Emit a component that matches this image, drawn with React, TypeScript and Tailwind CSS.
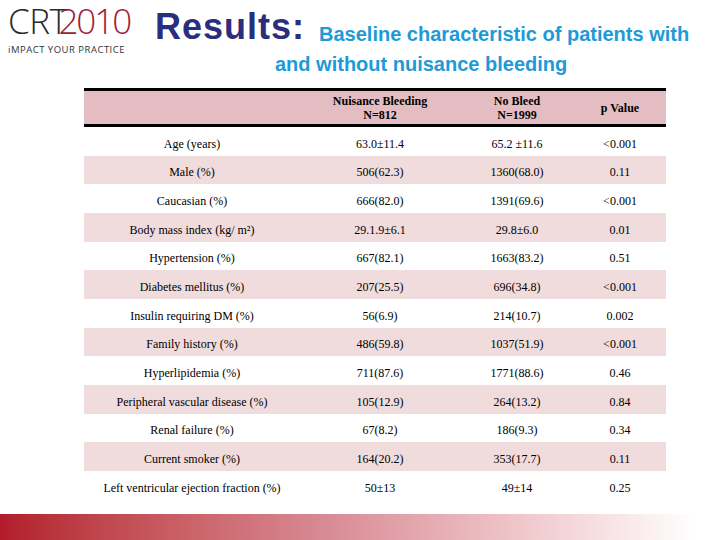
import React from "react";

const rows: [string, string, string, string][] = [
  ["Age (years)", "63.0±11.4", "65.2 ±11.6", "<0.001"],
  ["Male (%)", "506(62.3)", "1360(68.0)", "0.11"],
  ["Caucasian (%)", "666(82.0)", "1391(69.6)", "<0.001"],
  ["Body mass index (kg/ m²)", "29.1.9±6.1", "29.8±6.0", "0.01"],
  ["Hypertension (%)", "667(82.1)", "1663(83.2)", "0.51"],
  ["Diabetes mellitus (%)", "207(25.5)", "696(34.8)", "<0.001"],
  ["Insulin requiring DM (%)", "56(6.9)", "214(10.7)", "0.002"],
  ["Family history (%)", "486(59.8)", "1037(51.9)", "<0.001"],
  ["Hyperlipidemia (%)", "711(87.6)", "1771(88.6)", "0.46"],
  ["Peripheral vascular disease (%)", "105(12.9)", "264(13.2)", "0.84"],
  ["Renal failure (%)", "67(8.2)", "186(9.3)", "0.34"],
  ["Current smoker (%)", "164(20.2)", "353(17.7)", "0.11"],
  ["Left ventricular ejection fraction (%)", "50±13", "49±14", "0.25"],
];

export default function App() {
  return (
    <div className="w-[720px] h-[540px] bg-white flex flex-col overflow-hidden">
      {/* Header */}
      <div className="h-[88px] flex">
        <div className="w-[147px] pl-[8px] pt-[0px] flex flex-col" style={{ fontFamily: '"Open Sans", sans-serif' }}>
          <div className="flex items-baseline leading-[42px] h-[42px]">
            <span className="text-[35px] font-light text-[#2a2a2a] tracking-[-0.5px]">CRT</span>
            <span className="text-[35px] font-light text-[#9e2038] ml-[-9px] tracking-[-2px]">2010</span>
          </div>
          <div className="mt-[3px] text-[9.5px] leading-[10px] text-[#333] tracking-[0.5px] whitespace-nowrap">
            iMPACT YOUR PRACTICE
          </div>
        </div>
        <div className="flex flex-col pt-[9px] pl-[8px]" style={{ fontFamily: '"Liberation Sans", Arial, sans-serif' }}>
          <div className="flex items-baseline whitespace-nowrap">
            <span className="text-[36px] leading-none font-bold text-[#2b2d7d] tracking-[1px]">Results:</span>
            <span className="ml-[14px] text-[20px] leading-none font-bold text-[#1e9ad6] relative top-[2px]">
              Baseline characteristic of patients with
            </span>
          </div>
          <div className="pl-[120px] mt-[9px] text-[20px] leading-none font-bold text-[#1e9ad6] whitespace-nowrap">
            and without nuisance bleeding
          </div>
        </div>
      </div>

      {/* Table */}
      <div className="ml-[84px] w-[582px] text-[12px] text-black" style={{ fontFamily: '"Liberation Serif", "Times New Roman", serif' }}>
        <div className="grid grid-cols-[216px_160px_114px_92px] h-[39px] border-y-[3px] border-black bg-[#e3bdc1] font-bold leading-[14px] items-center text-center">
          <div></div>
          <div>Nuisance Bleeding<br />N=812</div>
          <div>No Bleed<br />N=1999</div>
          <div>p Value</div>
        </div>
        {rows.map((r, i) => (
          <div
            key={i}
            className={`grid grid-cols-[216px_160px_114px_92px] h-[28.67px] items-center text-center pt-[5px] ${i % 2 === 1 ? "bg-[#f0dcdd]" : "bg-white"}`}
          >
            <div className="whitespace-nowrap">{r[0]}</div>
            <div>{r[1]}</div>
            <div>{r[2]}</div>
            <div>{r[3]}</div>
          </div>
        ))}
      </div>

      {/* Footer gradient */}
      <div className="mt-auto h-[26px] bg-linear-to-r from-[#b21b2c] via-[#d88a94] via-45% to-white to-97%"></div>
    </div>
  );
}
